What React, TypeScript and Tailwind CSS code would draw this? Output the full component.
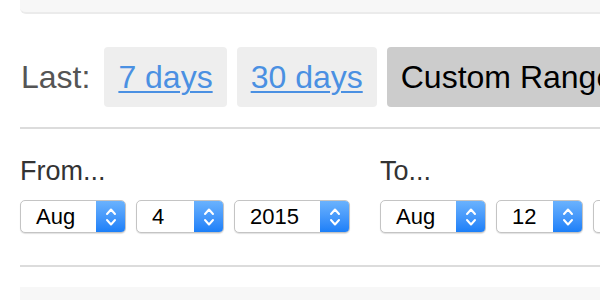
import React from 'react';

function Chevrons() {
    return (
        <svg width="14" height="24" viewBox="0 0 14 24" fill="none" stroke="white" strokeWidth="2" strokeLinecap="round" strokeLinejoin="round">
            <path d="M3 9 L7 4.5 L11 9" />
            <path d="M3 15 L7 19.5 L11 15" />
        </svg>
    );
}

function Select({ value, width }: { value: string; width: string }) {
    return (
        <div className={`${width} h-[33px] flex rounded-[5px] border border-[#c4c4c4] bg-white overflow-hidden shadow-[0_1px_1px_rgba(0,0,0,0.12)]`}>
            <span className="flex-1 flex items-center pl-[15px] text-[22px] text-black">{value}</span>
            <span className="w-[29px] flex items-center justify-center bg-gradient-to-b from-[#6ab2fd] to-[#1b7ff8]">
                <Chevrons />
            </span>
        </div>
    );
}

export default function App() {
    return (
        <div className="w-[600px] h-[300px] overflow-hidden bg-white" style={{ fontFamily: '"Liberation Sans", Arial, sans-serif' }}>
            <div className="w-[760px] ml-[20px]">
                <div className="h-[14px] bg-[#f7f7f7] border-b-2 border-[#ebebeb] rounded-bl-[6px]" />

                <div className="mt-[33px] flex items-center">
                    <span className="text-[32px] text-[#555555] ml-px mr-[14px]">Last:</span>
                    <div className="flex gap-[10px]">
                        <a href="#" className="h-[60px] px-[14px] flex items-center rounded-[4px] bg-[#eeeeee] text-[32px] text-[#4a90e2] underline decoration-2 underline-offset-[3px]">
                            7 days
                        </a>
                        <a href="#" className="h-[60px] px-[14px] flex items-center rounded-[4px] bg-[#eeeeee] text-[32px] text-[#4a90e2] underline decoration-2 underline-offset-[3px]">
                            30 days
                        </a>
                        <span className="h-[60px] px-[14px] flex items-center rounded-[4px] bg-[#cccccc] text-[32px] text-black whitespace-nowrap">
                            Custom Range
                        </span>
                    </div>
                </div>

                <div className="mt-[20px] h-[2px] bg-[#dcdcdc]" />

                <div className="mt-[28px] flex">
                    <div className="w-[360px]">
                        <div className="text-[27px] leading-[28px] text-[#333333]">From...</div>
                        <div className="mt-[15px] flex gap-[10px]">
                            <Select value="Aug" width="w-[106px]" />
                            <Select value="4" width="w-[88px]" />
                            <Select value="2015" width="w-[116px]" />
                        </div>
                    </div>
                    <div className="w-[360px]">
                        <div className="text-[27px] leading-[28px] text-[#333333]">To...</div>
                        <div className="mt-[15px] flex gap-[10px]">
                            <Select value="Aug" width="w-[106px]" />
                            <Select value="12" width="w-[87px]" />
                            <Select value="2015" width="w-[116px]" />
                        </div>
                    </div>
                </div>

                <div className="mt-[32px] h-[2px] bg-[#dcdcdc]" />

                <div className="mt-[20px] h-[40px] bg-[#f7f7f7]" />
            </div>
        </div>
    );
}
